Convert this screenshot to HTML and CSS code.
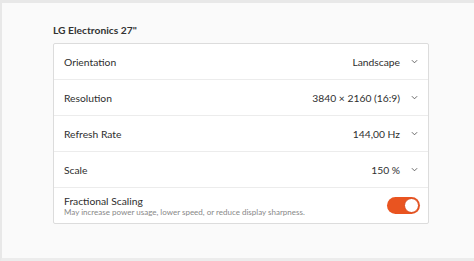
FILE: index.html
```html
<!DOCTYPE html>
<html>
  <head>
    <title>Displays</title>
    <link rel="stylesheet" href="styles.css">
  </head>
  <body>
    <div class="window">
      <div class="page">
        <h2 class="monitor">LG Electronics 27"</h2>
        <div class="card">
          <div class="row">
            <span class="label">Orientation</span>
            <span class="value">Landscape</span>
            <svg class="chevron" viewBox="0 0 8 5"><path d="M1 1l3 3 3-3"/></svg>
          </div>
          <div class="row">
            <span class="label">Resolution</span>
            <span class="value">3840 × 2160 (16:9)</span>
            <svg class="chevron" viewBox="0 0 8 5"><path d="M1 1l3 3 3-3"/></svg>
          </div>
          <div class="row">
            <span class="label">Refresh Rate</span>
            <span class="value">144,00 Hz</span>
            <svg class="chevron" viewBox="0 0 8 5"><path d="M1 1l3 3 3-3"/></svg>
          </div>
          <div class="row">
            <span class="label">Scale</span>
            <span class="value">150 %</span>
            <svg class="chevron" viewBox="0 0 8 5"><path d="M1 1l3 3 3-3"/></svg>
          </div>
          <div class="row switch-row">
            <div class="text">
              <span class="label">Fractional Scaling</span>
              <span class="hint">May increase power usage, lower speed, or reduce display sharpness.</span>
            </div>
            <div class="switch"><div class="knob"></div></div>
          </div>
        </div>
      </div>
    </div>
  </body>
</html>
```

FILE: styles.css
```css
body {
  margin: 0;
  font-family: Lato, "Open Sans", sans-serif;
  color: #2e2e2e;
}
.window {
  height: 261px;
  box-sizing: border-box;
  background-color: #fafafa;
  border-top: 3px solid #e8e8e8;
  border-left: 2px solid #e8e8e8;
  border-bottom: 3px solid #ececec;
}
.page {
  width: 376px;
  margin-left: 51px;
  padding-top: 22px;
}
.monitor {
  margin: 0 0 7px 0;
  font-size: 10.3px;
  font-weight: bold;
  line-height: 11px;
  color: #333;
}
.card {
  background-color: #fff;
  border: 1px solid #dcdcdc;
  border-radius: 2px;
}
.row {
  display: flex;
  align-items: center;
  height: 35px;
  padding: 0 10px 0 10px;
  border-top: 1px solid #ececec;
}
.row:first-child {
  border-top: none;
}
.switch-row {
  padding-right: 8px;
}
.label {
  flex: 1;
  font-size: 10.3px;
}
.value {
  font-size: 10.3px;
  margin-right: 11px;
}
.chevron {
  width: 7px;
  height: 5px;
  fill: none;
  stroke: #555;
  stroke-width: 1;
}
.text {
  flex: 1;
  display: flex;
  flex-direction: column;
}
.hint {
  font-size: 8px;
  color: #888;
  line-height: 10px;
}
.switch {
  width: 33px;
  height: 17px;
  box-sizing: border-box;
  border-radius: 9px;
  background-color: #e95420;
  display: flex;
  justify-content: flex-end;
  align-items: center;
  padding: 1px;
}
.knob {
  width: 15px;
  height: 15px;
  box-sizing: border-box;
  border-radius: 50%;
  background-color: #fff;
  border: 1px solid #d9481a;
}
```
